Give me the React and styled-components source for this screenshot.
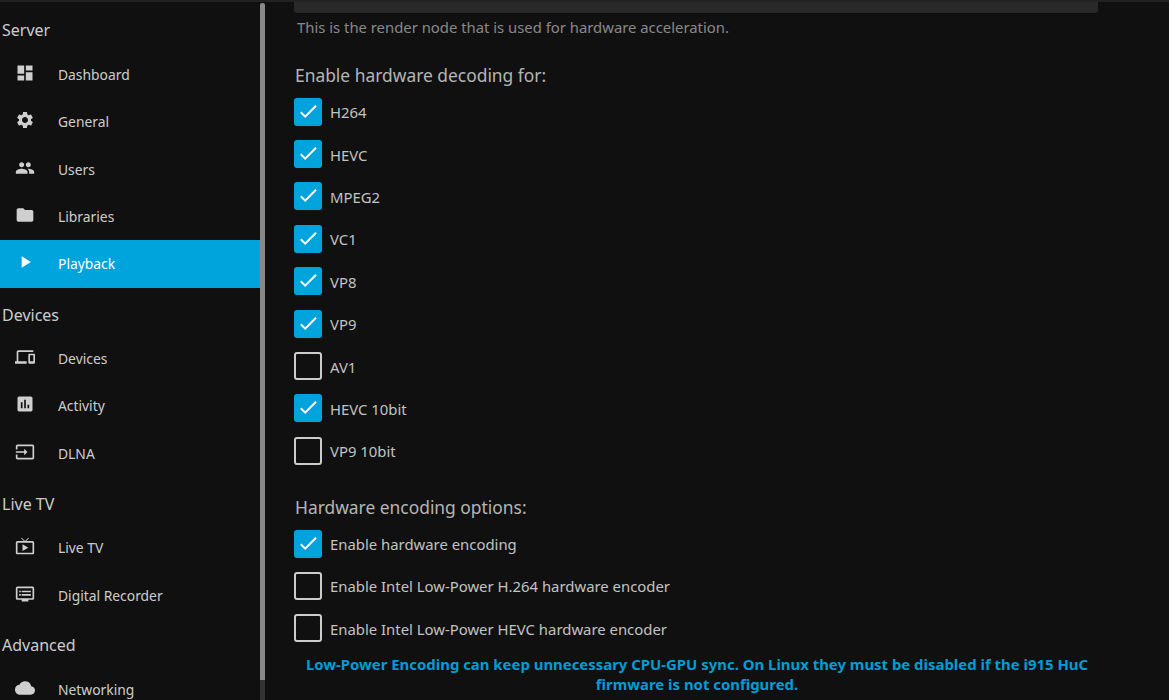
import React from "react";
import styled, { createGlobalStyle } from "styled-components";
import {
  MdDashboard,
  MdSettings,
  MdPeople,
  MdFolder,
  MdPlayArrow,
  MdDevices,
  MdAssessment,
  MdInput,
  MdLiveTv,
  MdDvr,
  MdCloud,
} from "react-icons/md";

const GlobalStyle = createGlobalStyle`
  html, body {
    margin: 0;
    height: 100%;
    overflow: hidden;
    background: #101010;
    font-family: "Noto Sans", sans-serif;
  }
`;

const Page = styled.div`
  display: flex;
  flex-direction: column;
  width: 1169px;
  height: 700px;
  overflow: hidden;
  background: #101010;
`;

const TopStrip = styled.div`
  flex: none;
  height: 2px;
  background: #222222;
`;

const Body = styled.div`
  display: flex;
  flex: 1;
  min-height: 0;
`;

const Sidebar = styled.nav`
  flex: none;
  width: 260px;
  height: 698px;
  overflow: hidden;
  padding-top: 15px;
  box-sizing: border-box;
`;

const SectionTitle = styled.h3`
  margin: ${(p) => p.$gap}px 0 ${(p) => p.$after}px;
  padding-left: 2px;
  height: 26px;
  line-height: 26px;
  font-size: 16px;
  font-weight: 400;
  color: rgba(255, 255, 255, 0.8);
`;

const NavItem = styled.a`
  display: flex;
  align-items: center;
  height: 47.4px;
  font-size: 13.85px;
  color: ${(p) => (p.$active ? "#ffffff" : "rgba(255, 255, 255, 0.8)")};
  background: ${(p) => (p.$active ? "#00a4dc" : "transparent")};

  svg {
    flex: none;
    width: 20px;
    height: 20px;
    margin: -3px 23px 0 15px;
  }
`;

const Scrollbar = styled.div`
  flex: none;
  display: flex;
  flex-direction: column;
  width: 5px;
  height: 698px;
  padding-top: 1px;
  box-sizing: border-box;
`;

const ScrollThumb = styled.div`
  flex: none;
  height: 677px;
  background: #888888;
  border-radius: 2px 2px 0 0;
`;

const ScrollTrack = styled.div`
  flex: 1;
  background: #333333;
`;

const Main = styled.main`
  flex: none;
  width: 804px;
  margin-left: 29px;
`;

const SelectBottom = styled.div`
  height: 11px;
  background: #292929;
  border-radius: 0 0 3px 3px;
`;

const HelpText = styled.div`
  margin: 4px 0 0 3px;
  height: 20px;
  line-height: 20px;
  font-size: 14.85px;
  color: rgba(255, 255, 255, 0.5);
`;

const GroupTitle = styled.h3`
  margin: ${(p) => p.$top} 0 ${(p) => p.$bottom} 1px;
  height: 26px;
  line-height: 26px;
  font-size: 17.4px;
  font-weight: 400;
  color: rgba(255, 255, 255, 0.7);
`;

const CheckRow = styled.label`
  display: flex;
  align-items: center;
  height: 42.4px;
  font-size: 14.88px;
  color: rgba(255, 255, 255, 0.75);
`;

const Box = styled.span`
  flex: none;
  display: flex;
  width: 28px;
  height: 28px;
  margin: -1px 8px 0 0;
  box-sizing: border-box;
  border-radius: 3px;
  border: ${(p) => (p.$checked ? "none" : "2px solid #cccccc")};
  background: ${(p) => (p.$checked ? "#00a4dc" : "transparent")};
`;

const Note = styled.p`
  margin: 3.7px 0 0;
  padding-left: 2px;
  font-size: 14.92px;
  line-height: 20.5px;
  font-weight: 700;
  text-align: center;
  color: #009cd4;
`;

const navSections = [
  {
    title: "Server",
    gap: 0,
    after: 7.7,
    items: [
      ["Dashboard", MdDashboard],
      ["General", MdSettings],
      ["Users", MdPeople],
      ["Libraries", MdFolder],
      ["Playback", MdPlayArrow, true],
    ],
  },
  {
    title: "Devices",
    gap: 14,
    after: 7.2,
    items: [
      ["Devices", MdDevices],
      ["Activity", MdAssessment],
      ["DLNA", MdInput],
    ],
  },
  {
    title: "Live TV",
    gap: 14.3,
    after: 6.7,
    items: [
      ["Live TV", MdLiveTv],
      ["Digital Recorder", MdDvr],
    ],
  },
  {
    title: "Advanced",
    gap: 12.8,
    after: 8,
    items: [["Networking", MdCloud]],
  },
];

const decoders = [
  ["H264", true],
  ["HEVC", true],
  ["MPEG2", true],
  ["VC1", true],
  ["VP8", true],
  ["VP9", true],
  ["AV1", false],
  ["HEVC 10bit", true],
  ["VP9 10bit", false],
];

const encoders = [
  ["Enable hardware encoding", true],
  ["Enable Intel Low-Power H.264 hardware encoder", false],
  ["Enable Intel Low-Power HEVC hardware encoder", false],
];

const Check = ({ label, checked }) => (
  <CheckRow>
    <Box $checked={checked}>
      {checked && (
        <svg width="28" height="28" viewBox="0 0 28 28" fill="none">
          <path d="M6.8 14.2L11.2 18.6L22 7.8" stroke="#fff" strokeWidth="2" />
        </svg>
      )}
    </Box>
    {label}
  </CheckRow>
);

const App = () => (
  <Page>
    <GlobalStyle />
    <TopStrip />
    <Body>
      <Sidebar>
        {navSections.map((section) => (
          <div key={section.title}>
            <SectionTitle $gap={section.gap} $after={section.after}>{section.title}</SectionTitle>
            {section.items.map(([label, Icon, active]) => (
              <NavItem key={label} $active={active}>
                <Icon />
                {label}
              </NavItem>
            ))}
          </div>
        ))}
      </Sidebar>
      <Scrollbar>
        <ScrollThumb />
        <ScrollTrack />
      </Scrollbar>
      <Main>
        <SelectBottom />
        <HelpText>This is the render node that is used for hardware acceleration.</HelpText>
        <GroupTitle $top="25px" $bottom="3px">Enable hardware decoding for:</GroupTitle>
        {decoders.map(([label, checked]) => (
          <Check key={label} label={label} checked={checked} />
        ))}
        <GroupTitle $top="21px" $bottom="3.3px">Hardware encoding options:</GroupTitle>
        {encoders.map(([label, checked]) => (
          <Check key={label} label={label} checked={checked} />
        ))}
        <Note>
          Low-Power Encoding can keep unnecessary CPU-GPU sync. On Linux they must be disabled if the i915 HuC firmware is not configured.
        </Note>
      </Main>
    </Body>
  </Page>
);

export default App;
